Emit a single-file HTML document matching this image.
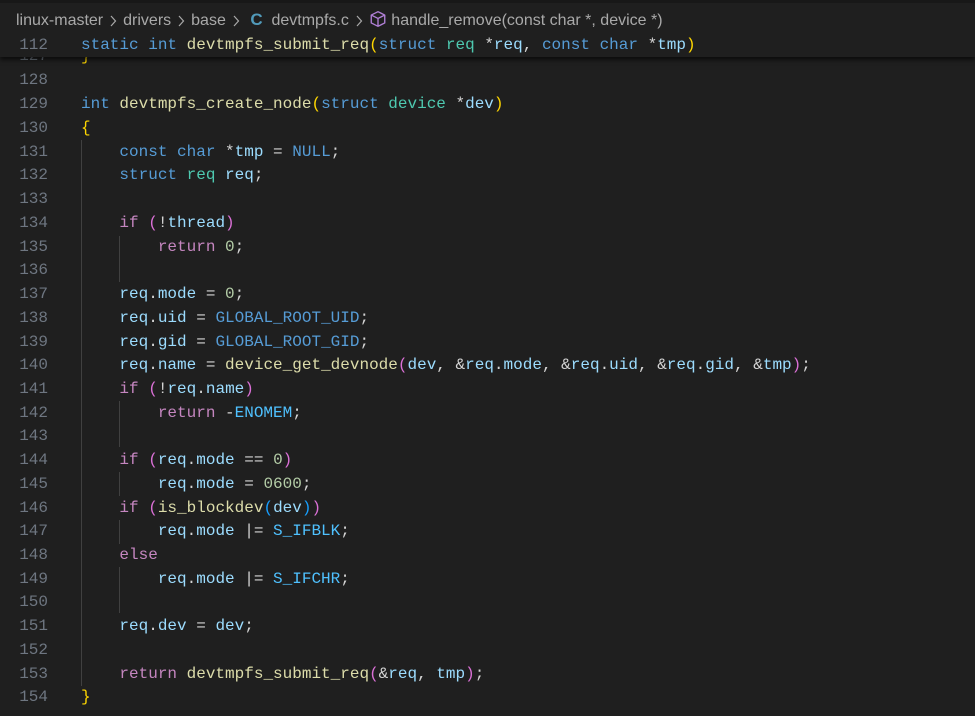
<!DOCTYPE html>
<html><head><meta charset="utf-8"><style>
html,body{margin:0;padding:0;width:975px;height:716px;overflow:hidden;background:#1f1f1f;}
.top{position:absolute;left:0;top:0;width:975px;height:3px;background:#181818;}
.bc{position:absolute;left:0;top:3px;height:32px;width:975px;background:#1f1f1f;font-family:"Liberation Sans",sans-serif;font-size:16px;color:#a9a9a9;line-height:34px;white-space:pre;padding-left:16px;box-sizing:border-box;}
.sep{display:inline-block;width:20px;text-align:center;}
.sep svg{vertical-align:-2px}
.ln{position:absolute;left:0;width:48px;text-align:right;font-family:"Liberation Mono",monospace;font-size:16px;color:#6e7681;height:24px;line-height:24px;}
.cd{position:absolute;left:81px;font-family:"Liberation Mono",monospace;font-size:16px;color:#d4d4d4;height:24px;line-height:24px;white-space:pre;}
.k{color:#569cd6}.f{color:#dcdcaa}.t{color:#4ec9b0}.v{color:#9cdcfe}.c{color:#c586c0}.n{color:#b5cea8}.m{color:#4fc1ff}
.g{color:#ffd700}.p{color:#da70d6}.b{color:#179fff}
.sticky{position:absolute;left:0;top:33px;width:975px;height:24px;background:#1f1f1f;box-shadow:0 3px 4px rgba(0,0,0,0.6);}
.guide{position:absolute;width:1px;background:#404040;}
</style></head><body>
<div class="top"></div>
<div class="guide" style="left:81px;top:140px;height:546px"></div>
<div class="guide" style="left:119px;top:236px;height:46px"></div>
<div class="guide" style="left:119px;top:401px;height:46px"></div>
<div class="guide" style="left:119px;top:472px;height:24px"></div>
<div class="guide" style="left:119px;top:520px;height:24px"></div>
<div class="guide" style="left:119px;top:567px;height:46px"></div>

<div class="ln" style="top:44px">127</div><div class="cd" style="top:44px"><span class="g">}</span></div>
<div class="ln" style="top:68px">128</div>
<div class="ln" style="top:92px">129</div><div class="cd" style="top:92px"><span class="k">int</span> <span class="f">devtmpfs_create_node</span><span class="g">(</span><span class="k">struct</span> <span class="t">device</span> *<span class="v">dev</span><span class="g">)</span></div>
<div class="ln" style="top:116px">130</div><div class="cd" style="top:116px"><span class="g">{</span></div>
<div class="ln" style="top:140px">131</div><div class="cd" style="top:140px">    <span class="k">const</span> <span class="k">char</span> *<span class="v">tmp</span> = <span class="k">NULL</span>;</div>
<div class="ln" style="top:163px">132</div><div class="cd" style="top:163px">    <span class="k">struct</span> <span class="t">req</span> <span class="v">req</span>;</div>
<div class="ln" style="top:187px">133</div>
<div class="ln" style="top:211px">134</div><div class="cd" style="top:211px">    <span class="c">if</span> <span class="p">(</span>!<span class="v">thread</span><span class="p">)</span></div>
<div class="ln" style="top:235px">135</div><div class="cd" style="top:235px">        <span class="c">return</span> <span class="n">0</span>;</div>
<div class="ln" style="top:258px">136</div>
<div class="ln" style="top:282px">137</div><div class="cd" style="top:282px">    <span class="v">req</span>.<span class="v">mode</span> = <span class="n">0</span>;</div>
<div class="ln" style="top:306px">138</div><div class="cd" style="top:306px">    <span class="v">req</span>.<span class="v">uid</span> = <span class="k">GLOBAL_ROOT_UID</span>;</div>
<div class="ln" style="top:330px">139</div><div class="cd" style="top:330px">    <span class="v">req</span>.<span class="v">gid</span> = <span class="k">GLOBAL_ROOT_GID</span>;</div>
<div class="ln" style="top:353px">140</div><div class="cd" style="top:353px">    <span class="v">req</span>.<span class="v">name</span> = <span class="f">device_get_devnode</span><span class="p">(</span><span class="v">dev</span>, &amp;<span class="v">req</span>.<span class="v">mode</span>, &amp;<span class="v">req</span>.<span class="v">uid</span>, &amp;<span class="v">req</span>.<span class="v">gid</span>, &amp;<span class="v">tmp</span><span class="p">)</span>;</div>
<div class="ln" style="top:377px">141</div><div class="cd" style="top:377px">    <span class="c">if</span> <span class="p">(</span>!<span class="v">req</span>.<span class="v">name</span><span class="p">)</span></div>
<div class="ln" style="top:401px">142</div><div class="cd" style="top:401px">        <span class="c">return</span> -<span class="m">ENOMEM</span>;</div>
<div class="ln" style="top:424px">143</div>
<div class="ln" style="top:448px">144</div><div class="cd" style="top:448px">    <span class="c">if</span> <span class="p">(</span><span class="v">req</span>.<span class="v">mode</span> == <span class="n">0</span><span class="p">)</span></div>
<div class="ln" style="top:472px">145</div><div class="cd" style="top:472px">        <span class="v">req</span>.<span class="v">mode</span> = <span class="n">0600</span>;</div>
<div class="ln" style="top:496px">146</div><div class="cd" style="top:496px">    <span class="c">if</span> <span class="p">(</span><span class="f">is_blockdev</span><span class="b">(</span><span class="v">dev</span><span class="b">)</span><span class="p">)</span></div>
<div class="ln" style="top:519px">147</div><div class="cd" style="top:519px">        <span class="v">req</span>.<span class="v">mode</span> |= <span class="m">S_IFBLK</span>;</div>
<div class="ln" style="top:543px">148</div><div class="cd" style="top:543px">    <span class="c">else</span></div>
<div class="ln" style="top:567px">149</div><div class="cd" style="top:567px">        <span class="v">req</span>.<span class="v">mode</span> |= <span class="m">S_IFCHR</span>;</div>
<div class="ln" style="top:590px">150</div>
<div class="ln" style="top:614px">151</div><div class="cd" style="top:614px">    <span class="v">req</span>.<span class="v">dev</span> = <span class="v">dev</span>;</div>
<div class="ln" style="top:638px">152</div>
<div class="ln" style="top:662px">153</div><div class="cd" style="top:662px">    <span class="c">return</span> <span class="f">devtmpfs_submit_req</span><span class="p">(</span>&amp;<span class="v">req</span>, <span class="v">tmp</span><span class="p">)</span>;</div>
<div class="ln" style="top:685px">154</div><div class="cd" style="top:685px"><span class="g">}</span></div>

<div class="sticky">
<div class="ln" style="top:0">112</div><div class="cd" style="top:0"><span class="k">static</span> <span class="k">int</span> <span class="f">devtmpfs_submit_req</span><span class="g">(</span><span class="k">struct</span> <span class="t">req</span> *<span class="v">req</span>, <span class="k">const</span> <span class="k">char</span> *<span class="v">tmp</span><span class="g">)</span></div>
</div>
<div class="bc">linux-master<span class="sep"><svg width="8" height="12" viewBox="0 0 8 12"><path d="M2 1L6.5 6L2 11" fill="none" stroke="#a9a9a9" stroke-width="1.2"/></svg></span>drivers<span class="sep"><svg width="8" height="12" viewBox="0 0 8 12"><path d="M2 1L6.5 6L2 11" fill="none" stroke="#a9a9a9" stroke-width="1.2"/></svg></span>base<span class="sep"><svg width="8" height="12" viewBox="0 0 8 12"><path d="M2 1L6.5 6L2 11" fill="none" stroke="#a9a9a9" stroke-width="1.2"/></svg></span> <b style="color:#519aba;font-size:17px">C</b>  devtmpfs.c<span class="sep"><svg width="8" height="12" viewBox="0 0 8 12"><path d="M2 1L6.5 6L2 11" fill="none" stroke="#a9a9a9" stroke-width="1.2"/></svg></span><svg width="18" height="18" viewBox="0 0 16 16" style="vertical-align:-3px"><path d="M8 1.5L14 4.5V11.5L8 14.5L2 11.5V4.5Z M2 4.5L8 7.5L14 4.5 M8 7.5V14.5" fill="none" stroke="#b180d7" stroke-width="1.2" stroke-linejoin="round"/></svg> handle_remove(const char *, device *)</div>
</body></html>
